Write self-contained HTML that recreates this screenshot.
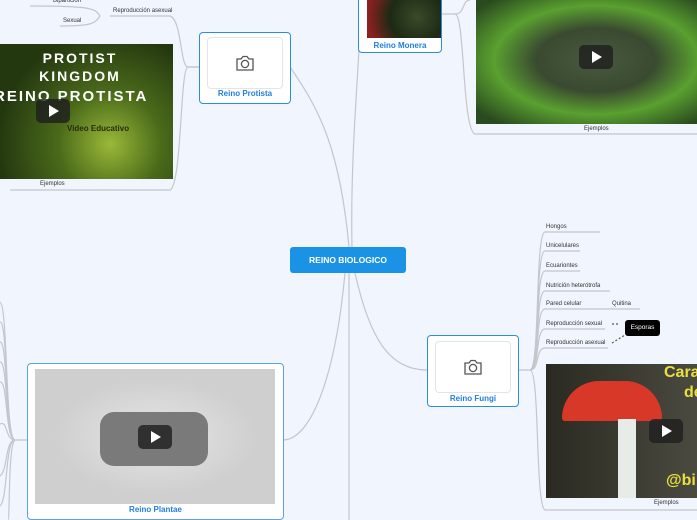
<!DOCTYPE html>
<html><head><meta charset="utf-8"><style>
body{margin:0;width:697px;height:520px;overflow:hidden;background:#f1f5fe;font-family:"Liberation Sans",sans-serif;position:relative}
.a{position:absolute}
.t{position:absolute;font-size:6px;color:#333;white-space:nowrap}
.node{position:absolute;background:#fff;border:1.5px solid #2b8ce8;border-radius:4px;box-sizing:border-box}
.lbl{position:absolute;left:0;right:0;text-align:center;font-weight:bold;color:#1f7fe0;font-size:8px}
.ph{position:absolute;background:#fff;border:1px solid #e4e4e4;border-radius:4px}
.play{position:absolute;width:34px;height:24px;background:rgba(30,30,30,.8);border-radius:5px}
.play:after{content:"";position:absolute;left:13px;top:6px;border-left:10px solid #fff;border-top:6px solid transparent;border-bottom:6px solid transparent}
</style></head><body>
<svg class="a" style="left:0;top:0" width="697" height="520" fill="none" stroke="#c4c6cc" stroke-width="1.2">
<path d="M349 247 C340 150 320 110 290 67"/>
<path d="M352 247 C350 150 360 60 360 20"/>
<path d="M345 273 C335 380 310 440 283 440"/>
<path d="M355 273 C370 340 390 370 427 370"/>
<path d="M349 273 L349 520"/>
<path d="M199 67 L188 67 C180 67 182 20 170 16 L110 16"/>
<path d="M199 67 L188 67 C180 67 182 185 170 190 L10 190"/>
<path d="M100 16 C95 8 90 6 30 6"/>
<path d="M100 16 C95 24 90 26 60 26"/>
<path d="M441 14 L455 14 C465 14 462 0 470 0"/>
<path d="M455 14 C465 14 462 130 475 134 L697 134"/>
<path d="M519 370 L530 370 C540 370 535 232 545 232 L600 232"/>
<path d="M530 370 C540 370 535 251 545 251 L580 251"/>
<path d="M530 370 C540 370 535 271 545 271 L580 271"/>
<path d="M530 370 C540 370 535 291 545 291 L610 291"/>
<path d="M530 370 C540 370 535 309 545 309 L640 309"/>
<path d="M530 370 C540 370 535 329 545 329 L605 329"/>
<path d="M530 370 C540 370 535 348 545 348 L608 348"/>
<path d="M530 370 C540 370 535 505 545 510 L697 510"/>
<path d="M27 440 L15 440 C5 440 8 305 0 302"/>
<path d="M15 440 C5 440 8 320 0 322"/><path d="M15 440 C5 440 8 340 0 342"/>
<path d="M15 440 C5 440 8 360 0 362"/><path d="M15 440 C5 440 8 380 0 382"/>
<path d="M15 440 C5 440 8 420 0 424"/><path d="M15 440 C5 440 8 470 0 476"/>
<path d="M15 440 C5 440 8 500 0 506"/><path d="M15 440 C8 445 10 520 8 520"/>
<path d="M612 324 L620 324" stroke="#555" stroke-dasharray="2 2"/>
<path d="M612 343 L625 335" stroke="#555" stroke-dasharray="2 2"/>
</svg>
<div class="a" style="left:290px;top:247px;width:116px;height:26px;background:#1a93e6;border-radius:3px;color:#fff;font-weight:bold;font-size:8.5px;text-align:center;line-height:26px">REINO BIOLOGICO</div>
<div class="t" style="left:53px;top:-2px">Bipartición</div>
<div class="t" style="left:63px;top:18px">Sexual</div>
<div class="t" style="left:113px;top:8px">Reproducción asexual</div>
<div class="node" style="left:199px;top:32px;width:92px;height:72px"><div class="ph" style="left:7px;top:4px;width:74px;height:50px"></div>
<svg class="a" style="left:35px;top:22px" width="20" height="16" fill="none" stroke="#555" stroke-width="1.3"><path d="M2 4 H6 L8 1.5 H12 L14 4 H18 V15 H2 Z"/><circle cx="10" cy="9" r="3.6"/></svg>
<div class="lbl" style="top:56px">Reino Protista</div></div>
<div class="a" style="left:0;top:44px;width:173px;height:135px;background:radial-gradient(circle at 110px 100px,#9ab838,#4a6a1a 35%,#243810 75%)">
<div class="a" style="left:20px;top:5px;color:#fff;font-weight:bold;font-size:14px;letter-spacing:2px;line-height:18px;text-align:center;width:120px">PROTIST<br>KINGDOM</div>
<div class="a" style="left:-6px;top:44px;color:#fff;font-weight:bold;font-size:15px;letter-spacing:2px">REINO PROTISTA</div>
<div class="a" style="left:67px;top:80px;color:#2a2a10;font-weight:bold;font-size:8px">Video Educativo</div>
<div class="play" style="left:36px;top:55px"></div></div>
<div class="t" style="left:40px;top:181px">Ejemplos</div>
<div class="node" style="left:358px;top:-10px;width:84px;height:63px"><div class="a" style="left:8px;top:6px;width:74px;height:41px;background:radial-gradient(circle at 50px 20px,#3a4a2a,#1c2a14 50%,#8a2020 90%)"></div><div class="lbl" style="top:50px">Reino Monera</div></div>
<div class="a" style="left:476px;top:0;width:221px;height:124px;background:radial-gradient(ellipse at 120px 60px,#4a5a40,#3a4a30 35%,#5aa030 60%,#2a4a1f 90%)"><div class="play" style="left:103px;top:45px"></div></div>
<div class="t" style="left:584px;top:126px">Ejemplos</div>
<div class="node" style="left:427px;top:335px;width:92px;height:72px"><div class="ph" style="left:7px;top:5px;width:74px;height:50px"></div>
<svg class="a" style="left:35px;top:23px" width="20" height="16" fill="none" stroke="#555" stroke-width="1.3"><path d="M2 4 H6 L8 1.5 H12 L14 4 H18 V15 H2 Z"/><circle cx="10" cy="9" r="3.6"/></svg>
<div class="lbl" style="top:58px">Reino Fungi</div></div>
<div class="t" style="left:546px;top:224px">Hongos</div>
<div class="t" style="left:546px;top:243px">Unicelulares</div>
<div class="t" style="left:546px;top:263px">Ecuariontes</div>
<div class="t" style="left:546px;top:283px">Nutrición heterótrofa</div>
<div class="t" style="left:546px;top:301px">Pared celular</div>
<div class="t" style="left:612px;top:301px">Quitina</div>
<div class="t" style="left:546px;top:321px">Reproducción sexual</div>
<div class="t" style="left:546px;top:340px">Reproducción asexual</div>
<div class="a" style="left:625px;top:320px;width:35px;height:16px;background:#000;border-radius:3px;color:#fff;font-size:6.5px;text-align:center;line-height:16px">Esporas</div>
<div class="a" style="left:546px;top:364px;width:151px;height:134px;background:linear-gradient(90deg,#2a2a22,#3a3a30 50%,#4a4a40);overflow:hidden">
<div class="a" style="left:16px;top:17px;width:100px;height:40px;background:#d83828;border-radius:50px 50px 4px 4px"></div>
<div class="a" style="left:72px;top:55px;width:18px;height:80px;background:#e8ece8"></div>
<div class="a" style="left:118px;top:0;color:#e8e040;font-weight:bold;font-size:16px">Cara</div>
<div class="a" style="left:138px;top:20px;color:#e8e040;font-weight:bold;font-size:16px">de</div>
<div class="a" style="left:120px;top:108px;color:#e8e040;font-weight:bold;font-size:16px">@bi</div>
<div class="play" style="left:103px;top:55px"></div></div>
<div class="t" style="left:654px;top:500px">Ejemplos</div>
<div class="node" style="left:27px;top:363px;width:257px;height:157px;border-color:#5aa0ee"><div class="a" style="left:7px;top:5px;width:240px;height:135px;background:radial-gradient(ellipse at 120px 68px,#e6e6e6,#cfcfcf 60%)"><div class="a" style="left:65px;top:43px;width:108px;height:54px;background:#7a7a7a;border-radius:14px"></div><div class="play" style="left:103px;top:56px"></div></div><div class="lbl" style="top:141px">Reino Plantae</div></div>
</body></html>
